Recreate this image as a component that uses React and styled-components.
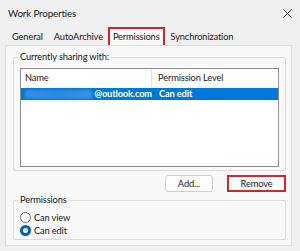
import React from 'react';
import styled, {createGlobalStyle} from 'styled-components';

const Global = createGlobalStyle`
    html, body { margin: 0; padding: 0; background: #f0f0f0; }
    body {
        font-family: Lato, "Noto Sans", sans-serif;
        font-size: 9.3px;
        line-height: 12px;
        letter-spacing: -0.15px;
        color: #1a1a1a;
    }
`;

const Window = styled.div`
    width: 300px;
    height: 251px;
    box-sizing: border-box;
    background: #f0f0f0;
    display: flex;
    flex-direction: column;
    overflow: hidden;
`;

const TitleBar = styled.div`
    height: 26px;
    flex: none;
    display: flex;
    align-items: center;
    justify-content: space-between;
    padding: 0 6px 0 8px;
    font-size: 9.8px;
`;

const Close = styled.svg`
    width: 9px;
    height: 9px;
    margin-right: 2px;
`;

const TabRow = styled.div`
    display: flex;
    flex: none;
    align-items: stretch;
    height: 18px;
    margin-top: 1px;
    padding-left: 6px;
`;

const Tab = styled.div`
    display: flex;
    align-items: center;
    padding: 0 ${p => p.pad}px;
    box-sizing: border-box;
    background: ${p => p.active ? '#f9f9f9' : 'transparent'};
    border: 2px solid ${p => p.active ? '#d4252b' : 'transparent'};
    border-bottom: none;
`;

const Panel = styled.div`
    margin: 0 8px 5px 5px;
    flex: 1;
    min-height: 0;
    background: #f9f9f9;
    border: 1px solid #dedede;
    padding: 5px 5px 0 7px;
    display: flex;
    flex-direction: column;
`;

const Group = styled.fieldset`
    margin: 0;
    border: 1px solid #dcdcdc;
    border-radius: 2px;
    padding: ${p => p.pad};
`;

const Legend = styled.legend`
    padding: 0 2px;
    margin-left: -2px;
    line-height: 12px;
`;

const List = styled.div`
    height: 97px;
    background: #fff;
    border: 1px solid #8f8f8f;
    display: flex;
    flex-direction: column;
`;

const HeaderRow = styled.div`
    display: grid;
    grid-template-columns: 131px 1fr;
    height: 18px;
    align-items: stretch;
`;

const HeaderCell = styled.div`
    display: flex;
    align-items: center;
    padding-left: ${p => p.pad}px;
    border-right: ${p => p.sep ? '1px solid #e3e3e3' : 'none'};
`;

const Row = styled.div`
    display: grid;
    grid-template-columns: 131px 1fr;
    height: 12px;
    margin-top: 1px;
    background: #0078d7;
    color: #fff;
    font-weight: 700;
    align-items: center;
`;

const EmailCell = styled.div`
    display: flex;
    align-items: center;
    padding-left: 4px;
    white-space: nowrap;
`;

const Blur = styled.span`
    display: inline-block;
    width: 70px;
    height: 9px;
    margin-right: 2px;
    background: linear-gradient(90deg, #3b8fe0, #2e86e2 50%, #3d92e6);
    filter: blur(1.5px);
    border-radius: 3px;
`;

const LevelCell = styled.div`
    padding-left: 7px;
`;

const ButtonRow = styled.div`
    display: flex;
    justify-content: flex-end;
    gap: 14px;
    margin: 4px 0 2px;
    height: 17px;
`;

const Button = styled.div`
    box-sizing: border-box;
    width: ${p => p.w}px;
    display: flex;
    align-items: center;
    justify-content: center;
    background: #fdfdfd;
    border: ${p => p.marked ? '2px solid #d4252b' : '1px solid #d0d0d0'};
    border-radius: ${p => p.marked ? '0' : '3px'};
`;

const Radio = styled.label`
    display: flex;
    align-items: center;
    gap: 3px;
    height: 13px;
`;

const Dot = styled.span`
    width: 11px;
    height: 11px;
    box-sizing: border-box;
    border-radius: 50%;
    border: ${p => p.on ? '3.5px solid #005fb8' : '1px solid #777'};
    background: #fff;
`;

export default function App() {
    return (
        <Window>
            <Global/>
            <TitleBar>
                <span>Work Properties</span>
                <Close viewBox="0 0 10 10">
                    <path d="M0.5 0.5 L9.5 9.5 M9.5 0.5 L0.5 9.5" stroke="#333" strokeWidth="1"/>
                </Close>
            </TitleBar>
            <TabRow>
                <Tab pad={4}>General</Tab>
                <Tab pad={3}>AutoArchive</Tab>
                <Tab pad={3} active>Permissions</Tab>
                <Tab pad={4}>Synchronization</Tab>
            </TabRow>
            <Panel>
                <Group pad="5px 6px 3px 6px">
                    <Legend>Currently sharing with:</Legend>
                    <List>
                        <HeaderRow>
                            <HeaderCell pad={4} sep>Name</HeaderCell>
                            <HeaderCell pad={6}>Permission Level</HeaderCell>
                        </HeaderRow>
                        <Row>
                            <EmailCell><Blur/>@outlook.com</EmailCell>
                            <LevelCell>Can edit</LevelCell>
                        </Row>
                    </List>
                </Group>
                <ButtonRow>
                    <Button w={48}>Add...</Button>
                    <Button w={59} marked>Remove</Button>
                </ButtonRow>
                <Group pad="5px 6px 2px 6px">
                    <Legend>Permissions</Legend>
                    <Radio><Dot/>Can view</Radio>
                    <Radio><Dot on/>Can edit</Radio>
                </Group>
            </Panel>
        </Window>
    );
}
